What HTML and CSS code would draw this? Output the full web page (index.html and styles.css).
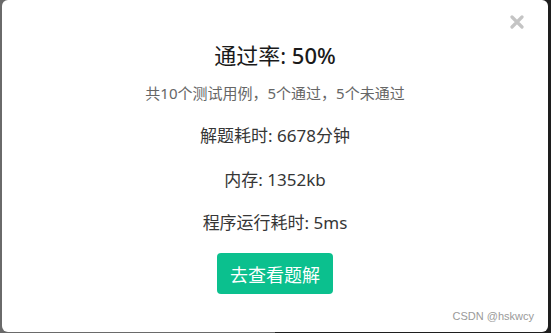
FILE: index.html
```html
<!DOCTYPE html>
<html lang="zh">
<head>
<meta charset="utf-8">
<link rel="stylesheet" href="styles.css">
</head>
<body>
<div class="panel">
  <span class="close" aria-label="关闭">
    <svg width="14" height="14" viewBox="0 0 14 14"><path d="M2 2L12 12M12 2L2 12" stroke="#c4c4c4" stroke-width="3.2" stroke-linecap="round"/></svg>
  </span>
  <div class="content">
    <div class="title">通过率: <span class="rate">50%</span></div>
    <div class="sub">共10个测试用例，5个通过，5个未通过</div>
    <div class="line l1">解题耗时: 6678分钟</div>
    <div class="line l2">内存: 1352kb</div>
    <div class="line l3">程序运行耗时: 5ms</div>
    <button class="btn">去查看题解</button>
  </div>
  <span class="mark">CSDN @hskwcy</span>
</div>
</body>
</html>
```
FILE: styles.css
```css
html, body {
  margin: 0;
  padding: 0;
  width: 551px;
  height: 333px;
  overflow: hidden;
}
body {
  background: linear-gradient(to right, #6a6a6a 0, #6a6a6a 50%, #1e1e1e 50%, #1e1e1e 100%);
  font-family: "Noto Sans", "Noto Sans CJK SC", sans-serif;
}
.panel {
  position: relative;
  box-sizing: border-box;
  margin-left: 2px;
  width: 546px;
  height: 332px;
  background: #fff;
  border-radius: 6px;
}
.content {
  display: flex;
  flex-direction: column;
  align-items: center;
  padding-top: 40px;
}
.title {
  font-size: 22px;
  line-height: 30px;
  color: #1a1a1a;
  font-weight: 400;
}
.rate {
  font-weight: 500;
}
.sub {
  margin-top: 12px;
  font-size: 15px;
  line-height: 22px;
  color: #666;
}
.line {
  font-size: 17px;
  line-height: 24px;
  color: #363636;
}
.l1 { margin-top: 20px; }
.l2 { margin-top: 20px; }
.l3 { margin-top: 19px; }
.btn {
  margin-top: 18px;
  width: 116px;
  height: 41px;
  border: none;
  border-radius: 4px;
  background: #0bc08e;
  color: #fff;
  font-family: "Noto Sans CJK SC", "Noto Sans", sans-serif;
  font-size: 18px;
  padding: 0;
}
.close {
  position: absolute;
  top: 15px;
  right: 24px;
  width: 14px;
  height: 14px;
  display: block;
}
.close svg { display: block; }
.mark {
  position: absolute;
  right: 14px;
  top: 310px;
  font-family: "Liberation Sans", Arial, sans-serif;
  font-size: 11px;
  color: #9a9a9a;
}
```
